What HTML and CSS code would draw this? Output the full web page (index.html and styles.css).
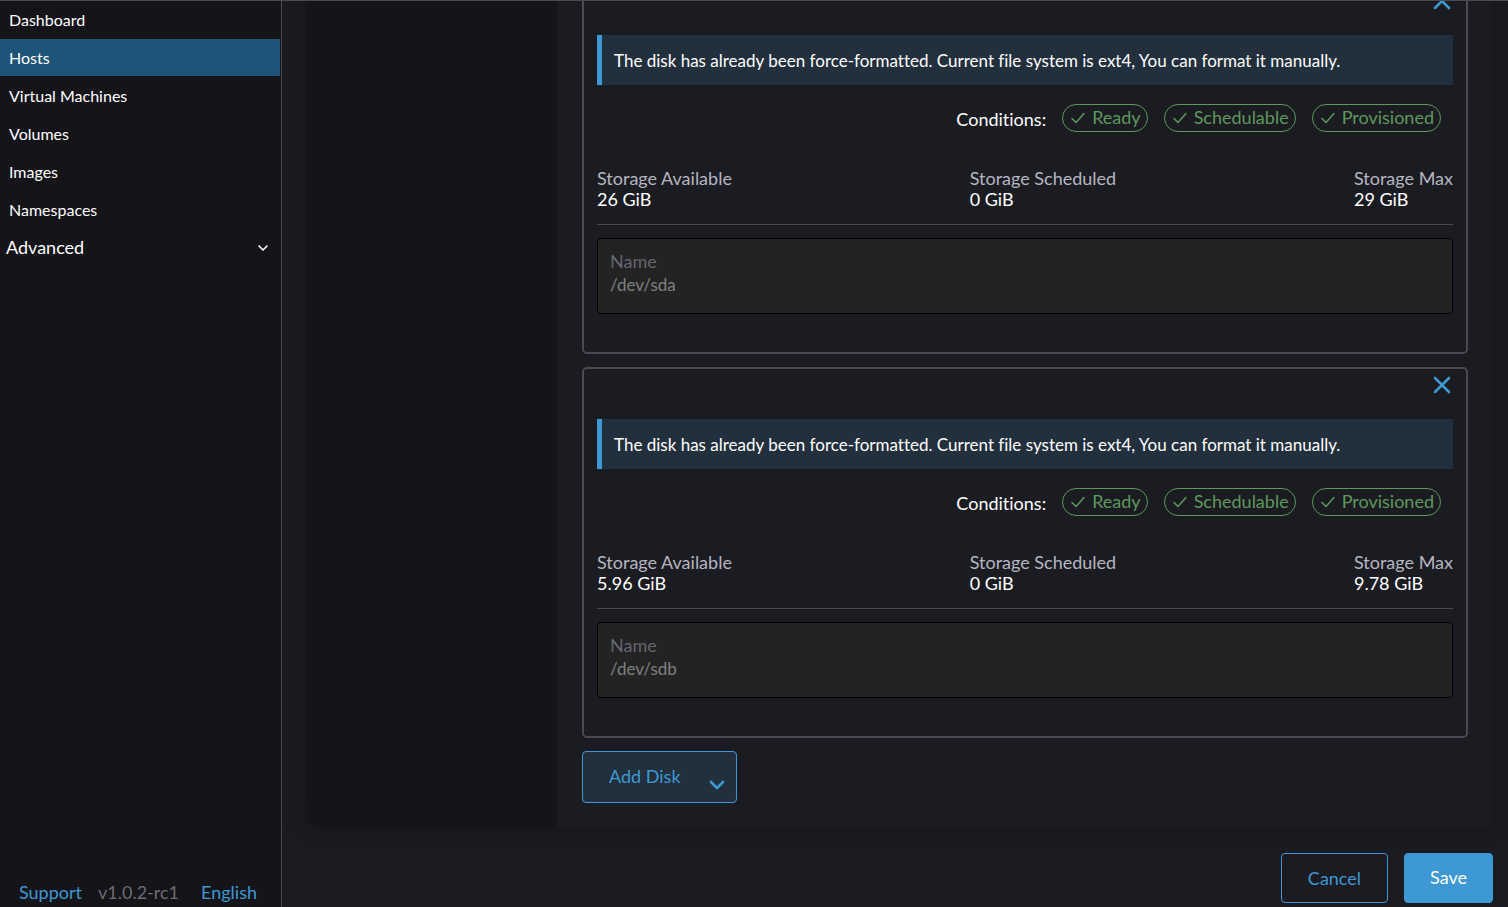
FILE: index.html
```html
<!DOCTYPE html>
<html lang="en">
<head>
    <meta charset="UTF-8">
    <meta name="viewport" content="width=device-width, initial-scale=1.0">
    <title>Hosts</title>
    <link rel="stylesheet" href="styles.css">
</head>
<body>
    <!-- icons shared by the disk cards -->
    <svg class="symbols">
        <symbol id="check" viewBox="0 0 14 12">
            <path d="M1 6.5 L5 10.5 L13 1.5" />
        </symbol>
        <symbol id="close" viewBox="0 0 18 18">
            <path d="M2 2 L16 16 M16 2 L2 16" />
        </symbol>
    </svg>

    <nav class="sidebar">
        <div class="menu">
            <a href="#">Dashboard</a>
            <a href="#" class="active">Hosts</a>
            <a href="#">Virtual Machines</a>
            <a href="#">Volumes</a>
            <a href="#">Images</a>
            <a href="#">Namespaces</a>
            <button type="button" class="group">
                Advanced
                <svg class="group-icon" viewBox="0 0 10 6"><path d="M1 1 L5 5 L9 1" /></svg>
            </button>
        </div>
        <div class="footer">
            <a href="#">Support</a>
            <span class="version">v1.0.2-rc1</span>
            <a href="#" class="language">English</a>
        </div>
    </nav>

    <main class="main">
        <div class="panel">
            <div class="tabs"></div>
            <div class="tab-content">

                <section class="disk">
                    <div class="disk-header">
                        <button type="button" class="remove" aria-label="Remove disk"><svg><use href="#close" /></svg></button>
                    </div>
                    <div class="banner">The disk has already been force-formatted. Current file system is ext4, You can format it manually.</div>
                    <div class="conditions">
                        <span class="conditions-label">Conditions:</span>
                        <span class="pill"><svg><use href="#check" /></svg>Ready</span>
                        <span class="pill"><svg><use href="#check" /></svg>Schedulable</span>
                        <span class="pill"><svg><use href="#check" /></svg>Provisioned</span>
                    </div>
                    <dl class="storage">
                        <div><dt>Storage Available</dt><dd>26 GiB</dd></div>
                        <div><dt>Storage Scheduled</dt><dd>0 GiB</dd></div>
                        <div><dt>Storage Max</dt><dd>29 GiB</dd></div>
                    </dl>
                    <div class="field">
                        <label for="disk-a">Name</label>
                        <input type="text" id="disk-a" value="/dev/sda" disabled>
                    </div>
                </section>

                <section class="disk">
                    <div class="disk-header">
                        <button type="button" class="remove" aria-label="Remove disk"><svg><use href="#close" /></svg></button>
                    </div>
                    <div class="banner">The disk has already been force-formatted. Current file system is ext4, You can format it manually.</div>
                    <div class="conditions">
                        <span class="conditions-label">Conditions:</span>
                        <span class="pill"><svg><use href="#check" /></svg>Ready</span>
                        <span class="pill"><svg><use href="#check" /></svg>Schedulable</span>
                        <span class="pill"><svg><use href="#check" /></svg>Provisioned</span>
                    </div>
                    <dl class="storage">
                        <div><dt>Storage Available</dt><dd>5.96 GiB</dd></div>
                        <div><dt>Storage Scheduled</dt><dd>0 GiB</dd></div>
                        <div><dt>Storage Max</dt><dd>9.78 GiB</dd></div>
                    </dl>
                    <div class="field">
                        <label for="disk-b">Name</label>
                        <input type="text" id="disk-b" value="/dev/sdb" disabled>
                    </div>
                </section>

                <button type="button" class="btn add-disk">
                    Add Disk
                    <svg viewBox="0 0 16 10"><path d="M2 2 L8 8 L14 2" /></svg>
                </button>
            </div>
        </div>

        <div class="actions">
            <button type="button" class="btn">Cancel</button>
            <button type="button" class="btn primary">Save</button>
        </div>
    </main>
</body>
</html>
```
FILE: styles.css
```css
* {
    box-sizing: border-box;
}

body {
    margin: 0;
    height: 100vh;
    display: flex;
    border-top: 1px solid #4a4b52;
    overflow: hidden;
    background: #1b1c21;
    color: #fff;
    font-family: Lato, sans-serif;
    font-size: 18px;
    line-height: 21px;
    font-variant-ligatures: none;
}

a {
    color: #3d98d3;
    text-decoration: none;
}

button,
input {
    font: inherit;
}

button {
    cursor: pointer;
}

svg {
    fill: none;
    stroke: currentColor;
    stroke-linecap: round;
    stroke-linejoin: round;
}

.symbols {
    display: none;
}

/* sidebar */
.sidebar {
    flex: 0 0 282px;
    display: flex;
    flex-direction: column;
    justify-content: space-between;
    border-right: 1px solid #4a4b52;
    background: #141419;
}

.menu {
    display: flex;
    flex-direction: column;
    gap: 1px;
    margin-right: 1px;
}

.menu a {
    padding: 0 9px;
    color: #fff;
    font-size: 16px;
    line-height: 37px;
}

.menu .active {
    background: #1d5477;
}

.group {
    display: flex;
    align-items: center;
    justify-content: space-between;
    padding: 0 12px 0 6px;
    border: 0;
    background: none;
    color: #fff;
    line-height: 37px;
}

.group-icon {
    width: 10px;
    height: 6px;
    stroke-width: 1.6;
}

.footer {
    display: flex;
    padding: 0 19px 4px;
}

.version {
    margin: 0 22px 0 16px;
    color: #6c6c76;
}

/* main column, kept scrolled to its end */
.main {
    flex: 1;
    min-width: 0;
    display: flex;
    flex-direction: column;
    justify-content: flex-end;
    padding: 0 15px 4px 25px;
    overflow: hidden;
}

.panel {
    flex-shrink: 0;
    display: flex;
    border-radius: 10px;
    box-shadow: 0 0 20px #141419;
}

.tabs {
    flex: 0 0 250px;
    border-radius: 10px 0 0 10px;
    background: #141419;
}

.tab-content {
    flex: 1;
    min-width: 0;
    padding: 25px;
    background: #1b1c21;
}

.disk {
    margin-bottom: 13px;
    padding: 0 13px 38px;
    border: 2px solid #4a4b52;
    border-radius: 5px;
}

.disk-header {
    display: flex;
    justify-content: flex-end;
    height: 50px;
    padding-top: 7px;
}

.remove {
    width: 20px;
    height: 18px;
    padding: 0;
    border: 0;
    background: none;
    color: #3d98d3;
}

.remove svg {
    display: block;
    width: 18px;
    height: 18px;
    stroke-width: 2.6;
}

.banner {
    padding: 15px 12px 14px;
    border-left: 5px solid #3d98d3;
    background: #222f3c;
    font-size: 17px;
}

.conditions {
    display: flex;
    justify-content: flex-end;
    align-items: flex-end;
    gap: 16px;
    margin: 19px 12px 36px 0;
}

.conditions-label {
    line-height: 26px;
}

.pill {
    display: flex;
    align-items: center;
    gap: 7px;
    padding: 2px 6px 3px 8px;
    border: 1px solid #5d995d;
    border-radius: 14px;
    color: #5d995d;
}

.pill svg {
    width: 14px;
    height: 12px;
    stroke-width: 1.5;
}

.storage {
    display: flex;
    justify-content: space-between;
    margin: 0 0 13px;
    padding-bottom: 14px;
    border-bottom: 1px solid #4a4b52;
}

.storage dt {
    color: #b6b6c2;
}

.storage dd {
    margin: 0;
}

.field {
    display: flex;
    flex-direction: column;
    padding: 10px 12px 16px;
    border: 1px solid #000;
    border-radius: 4px;
    background: #232324;
    line-height: 24px;
}

.field label {
    color: #65656f;
}

.field input {
    height: 24px;
    padding: 0;
    border: 0;
    background: none;
    color: #80807f;
    font-size: 17px;
}

/* buttons */
.btn {
    padding: 14px 26px;
    border: 1px solid #3d98d3;
    border-radius: 4px;
    background: none;
    color: #3d98d3;
    line-height: 20px;
}

.btn.primary {
    padding: 13px 25px 15px;
    background: #3d98d3;
    color: #fff;
}

.add-disk {
    display: flex;
    gap: 28px;
    padding: 14px 11px 16px 26px;
    background: #222f3c;
}

.add-disk svg {
    align-self: flex-end;
    width: 16px;
    height: 10px;
    margin-bottom: -4px;
    stroke-width: 2.6;
}

.actions {
    flex-shrink: 0;
    display: flex;
    justify-content: flex-end;
    gap: 16px;
    margin-top: 25px;
}
```
